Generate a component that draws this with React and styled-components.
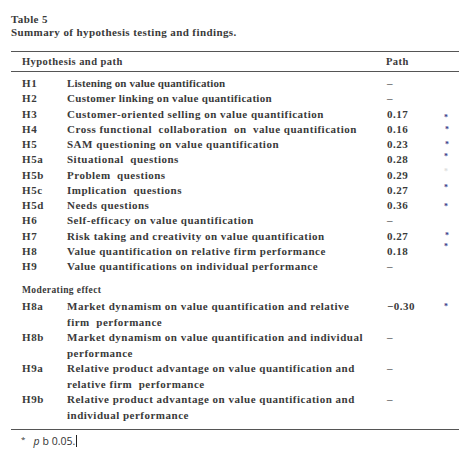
import React from "react";
import styled, { createGlobalStyle } from "styled-components";

const Global = createGlobalStyle`
  html, body { margin: 0; padding: 0; background: #ffffff; }
  body { font-family: "Liberation Serif", "DejaVu Serif", serif; color: #333; }
`;

const Page = styled.div`
  width: 474px;
  height: 474px;
  padding: 13px 15px 0 11px;
  box-sizing: border-box;
`;

const Caption = styled.div`
  font-size: 11px;
  line-height: 12.5px;
  font-weight: bold;
  color: #3a3a3a;
  letter-spacing: 0.4px;
`;

const Table = styled.div`
  margin-top: 13px;
  border-top: 1.5px solid #555;
  border-bottom: 1.5px solid #555;
`;

const HeadRow = styled.div`
  display: grid;
  grid-template-columns: 364px 1fr;
  padding-left: 11px;
  height: 19px;
  align-items: center;
  border-bottom: 1.5px solid #555;
  font-size: 10.5px;
  font-weight: bold;
  letter-spacing: 0.45px;
  color: #3a3a3a;
`;

const Body = styled.div`
  padding: 4px 0 6px 11px;
`;

const Row = styled.div`
  display: grid;
  grid-template-columns: 45px 319px 58px 1fr;
  font-size: 11px;
  line-height: ${p => p.$lh || 15.25}px;
  font-weight: bold;
  letter-spacing: ${p => p.$ls ?? 0.5}px;
  color: #3a3a3a;
`;

const Label = styled.div`
  letter-spacing: 0.6px;
`;

const Desc = styled.div`
  white-space: pre;
`;

const Value = styled.div`
  color: ${p => (p.$dash ? "#666" : "#3a3a3a")};
  padding-left: 1px;
`;

const Star = styled.div`
  font-size: 8px;
  line-height: 8px;
  color: ${p => (p.$faint ? "#ddd" : "#3b3b8a")};
  padding-left: ${p => p.$dx}px;
  margin-top: ${p => p.$dy}px;
`;

const Section = styled.div`
  font-size: 9.5px;
  font-weight: bold;
  letter-spacing: 0.4px;
  color: #3a3a3a;
  margin: 9px 0 2px;
  line-height: 14px;
`;

const Foot = styled.div`
  padding: 4px 0 0 10px;
  font-family: "Open Sans", "Liberation Sans", sans-serif;
  font-size: 10.5px;
  color: #333;
  display: flex;
  align-items: center;
`;

const Sup = styled.span`
  font-size: 8px;
  position: relative;
  top: -3px;
  margin-right: 8px;
`;

const P = styled.span`
  font-style: italic;
  margin-right: 3px;
`;

const Cursor = styled.span`
  display: inline-block;
  width: 1px;
  height: 12px;
  background: #222;
  margin-left: 1px;
`;

const rows = [
  { h: "H1", d: "Listening on value quantification", v: "–", ls: 0.1 },
  { h: "H2", d: "Customer linking on value quantification", v: "–", ls: 0.3 },
  { h: "H3", d: "Customer-oriented selling on value quantification", v: "0.17", star: [85, 3] },
  { h: "H4", d: "Cross functional  collaboration  on  value quantification", v: "0.16", star: [86, 0] },
  { h: "H5", d: "SAM questioning on value quantification", v: "0.23", star: [86, 0] },
  { h: "H5a", d: "Situational  questions", v: "0.28", star: [85, -3] },
  { h: "H5b", d: "Problem  questions", v: "0.29", star: [85, -4], faint: true },
  { h: "H5c", d: "Implication  questions", v: "0.27", star: [83, -3] },
  { h: "H5d", d: "Needs questions", v: "0.36", star: [83, 1] },
  { h: "H6", d: "Self-efficacy on value quantification", v: "–" },
  { h: "H7", d: "Risk taking and creativity on value quantification", v: "0.27", star: [86, -1] },
  { h: "H8", d: "Value quantification on relative firm performance", v: "0.18", star: [85, -5] },
  { h: "H9", d: "Value quantifications on individual performance", v: "–" },
];

const mod = [
  { h: "H8a", d: ["Market dynamism on value quantification and relative", "firm  performance"], v: "−0.30", star: [83, 0] },
  { h: "H8b", d: ["Market dynamism on value quantification and individual", "performance"], v: "–" },
  { h: "H9a", d: ["Relative product advantage on value quantification and", "relative firm  performance"], v: "–" },
  { h: "H9b", d: ["Relative product advantage on value quantification and", "individual performance"], v: "–" },
];

function R({ r, lh }) {
  const lines = Array.isArray(r.d) ? r.d : [r.d];
  return (
    <Row $lh={lh} $ls={r.ls}>
      <Label>{r.h}</Label>
      <Desc>
        {lines.map((l, i) => (
          <div key={i}>{l}</div>
        ))}
      </Desc>
      <Value $dash={r.v === "–"}>{r.v}</Value>
      <div>
        {r.star && (
          <Star $dx={r.star[0] - 85} $dy={r.star[1] + 4} $faint={r.faint}>
            *
          </Star>
        )}
      </div>
    </Row>
  );
}

export default function App() {
  return (
    <Page>
      <Global />
      <Caption>Table 5</Caption>
      <Caption>Summary of hypothesis testing and findings.</Caption>
      <Table>
        <HeadRow>
          <span>Hypothesis and path</span>
          <span>Path</span>
        </HeadRow>
        <Body>
          {rows.map(r => (
            <R key={r.h} r={r} />
          ))}
          <Section>Moderating  effect</Section>
          {mod.map(r => (
            <R key={r.h} r={r} lh={15.5} />
          ))}
        </Body>
      </Table>
      <Foot>
        <Sup>*</Sup>
        <P>p</P>b 0.05.<Cursor />
      </Foot>
    </Page>
  );
}
